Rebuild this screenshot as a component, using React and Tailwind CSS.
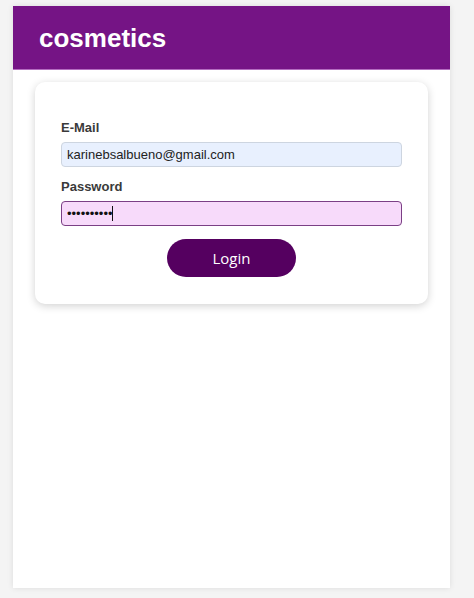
import { useState } from 'react';

const App = () => {
  const [email, setEmail] = useState('karinebsalbueno@gmail.com');
  const [password, setPassword] = useState('0123456789');

  const handleSubmit = (e) => {
    e.preventDefault();
  };

  return (
    <div className="min-h-[598px] bg-[#f4f4f4] pt-[6px] font-['Liberation_Sans',Arial,sans-serif]">
      <div className="ml-[13px] w-[437px] h-[582px] bg-white shadow-[0_0_6px_rgba(0,0,0,0.10)]">
        <header className="h-[64px] flex items-center pl-[26px] bg-[#751485] border-b border-[#b46cc0]">
          <h1 className="text-[26px] font-bold text-white leading-none">cosmetics</h1>
        </header>

        <div className="mx-[22px] mt-[12px] bg-white rounded-[10px] shadow-[0_2px_8px_rgba(0,0,0,0.18)] px-[26px] pt-[38px] pb-[27px]">
          <form onSubmit={handleSubmit}>
            <label className="block text-[13px] font-bold text-[#3a3a3a] leading-[16px] mb-[6px]">E-Mail</label>
            <input
              type="text"
              value={email}
              onChange={(e) => setEmail(e.target.value)}
              className="block w-full h-[25px] px-[5px] text-[13px] text-[#222] bg-[#e8f0fe] border border-[#cdd5e0] rounded-[4px] outline-none"
            />

            <label className="block mt-[12px] text-[13px] font-bold text-[#3a3a3a] leading-[16px] mb-[6px]">Password</label>
            <div className="relative">
              <input
                type="password"
                value={password}
                onChange={(e) => setPassword(e.target.value)}
                className="block w-full h-[25px] px-[5px] text-[13px] text-[#111] bg-[#f7dafa] border border-[#7b3f85] rounded-[4px] outline-none"
              />
              <span className="absolute left-[51px] top-[5px] w-px h-[15px] bg-[#111]"></span>
            </div>

            <div className="flex justify-center mt-[13px]">
              <button
                type="submit"
                className="w-[129px] h-[38px] rounded-full bg-[#550060] text-white text-[15px] font-medium font-['Open_Sans',sans-serif]"
              >
                Login
              </button>
            </div>
          </form>
        </div>
      </div>
    </div>
  );
};

export default App;
